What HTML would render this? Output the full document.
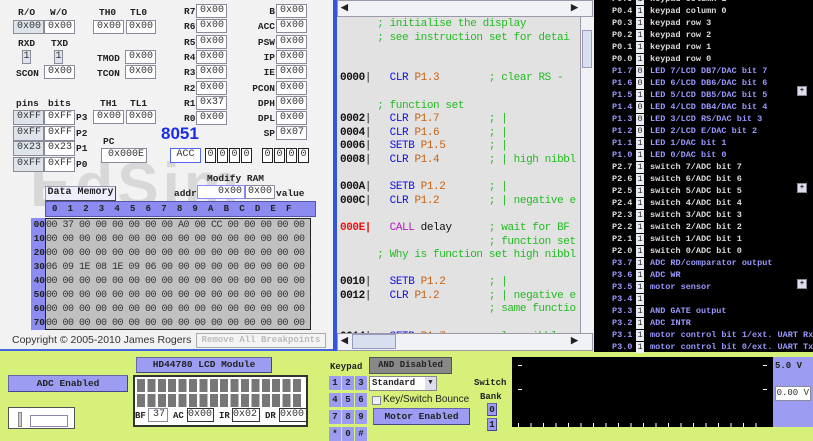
<!DOCTYPE html>
<html><head><meta charset="utf-8"><style>
*{margin:0;padding:0;box-sizing:border-box}
body{width:813px;height:427px;overflow:hidden;position:relative;background:#d6f07a;font-family:"Liberation Mono",monospace;font-size:10px;font-weight:bold;color:#222}
.a{position:absolute;white-space:pre}
.b{position:absolute;background:#fff;border:1px solid #8a8a9a;font-weight:normal;font-size:10px;text-align:right;padding-right:2px;line-height:12px;color:#333}
.g{background:#dde4ea}
.lbl{position:absolute;font-size:9.5px;font-weight:bold;white-space:pre}
.btn{position:absolute;background:#9c9cf2;border:1px solid #66a;border-right-color:#448;border-bottom-color:#448;text-align:center;font-size:9.5px;font-weight:bold;color:#222}
.code{position:absolute;font-size:11px;letter-spacing:-0.4px;white-space:pre;font-weight:normal}
.ad{color:#111;font-weight:bold}.mn{color:#1010e0}.op{color:#c86010}.cm{color:#22bb22}
.pr{position:absolute;left:596px;width:217px;height:12px;font-size:8.5px;line-height:12px;white-space:pre}
.pr .l{position:absolute;left:16px}.pr .v{position:absolute;left:40px;top:1px;width:8px;height:11px;background:#e8eef4;color:#222;text-align:center;font-weight:normal;line-height:11px}.pr .d{position:absolute;left:54px}
</style></head><body>
<!-- left panel -->
<div class="a" style="left:0;top:0;width:334px;height:351px;background:#f2f2f2;border-bottom:2px solid #4466dd"></div>
<div class="a" style="left:30px;top:150px;font-size:62px;color:#d8d8d8;font-family:'Liberation Sans',sans-serif;font-weight:bold;letter-spacing:4px">EdSim</div>
<div class="a" style="left:333px;top:0;width:4px;height:351px;background:#3355dd"></div>
<div class="lbl" style="left:18px;top:7px">R/O</div><div class="lbl" style="left:50px;top:7px">W/O</div>
<div class="b g" style="left:13px;top:20px;width:31px;height:14px">0x00</div><div class="b" style="left:44px;top:20px;width:31px;height:14px">0x00</div>
<div class="lbl" style="left:99px;top:7px">TH0</div><div class="lbl" style="left:130px;top:7px">TL0</div>
<div class="b" style="left:93px;top:20px;width:31px;height:14px">0x00</div><div class="b" style="left:126px;top:20px;width:30px;height:14px">0x00</div>
<div class="lbl" style="left:18px;top:38px">RXD</div><div class="lbl" style="left:51px;top:38px">TXD</div>
<div class="b g" style="left:22px;top:50px;width:9px;height:14px;padding:0;text-align:center">1</div><div class="b g" style="left:54px;top:50px;width:9px;height:14px;padding:0;text-align:center">1</div>
<div class="lbl" style="left:16px;top:68px">SCON</div><div class="b" style="left:44px;top:65px;width:31px;height:14px">0x00</div>
<div class="lbl" style="left:97px;top:53px">TMOD</div><div class="b" style="left:125px;top:50px;width:31px;height:14px">0x00</div>
<div class="lbl" style="left:97px;top:68px">TCON</div><div class="b" style="left:125px;top:65px;width:31px;height:14px">0x00</div>
<div class="lbl" style="left:16px;top:98px">pins</div><div class="lbl" style="left:48px;top:98px">bits</div>
<div class="lbl" style="left:100px;top:98px">TH1</div><div class="lbl" style="left:130px;top:98px">TL1</div>
<div class="b" style="left:93px;top:110px;width:31px;height:14px">0x00</div><div class="b" style="left:126px;top:110px;width:30px;height:14px">0x00</div>
<div class="b g" style="left:13px;top:110px;width:31px;height:15px">0xFF</div><div class="b" style="left:44px;top:110px;width:31px;height:15px">0xFF</div><div class="lbl" style="left:76px;top:112px">P3</div>
<div class="b g" style="left:13px;top:126px;width:31px;height:15px">0xFF</div><div class="b" style="left:44px;top:126px;width:31px;height:15px">0xFF</div><div class="lbl" style="left:76px;top:128px">P2</div>
<div class="b g" style="left:13px;top:141px;width:31px;height:15px">0x23</div><div class="b" style="left:44px;top:141px;width:31px;height:15px">0x23</div><div class="lbl" style="left:76px;top:143px">P1</div>
<div class="b g" style="left:13px;top:157px;width:31px;height:15px">0xFF</div><div class="b" style="left:44px;top:157px;width:31px;height:15px">0xFF</div><div class="lbl" style="left:76px;top:159px">P0</div>
<div class="lbl" style="left:103px;top:136px">PC</div><div class="b" style="left:101px;top:148px;width:46px;height:15px">0x000E</div>
<div class="a" style="left:161px;top:124px;font-family:'Liberation Sans',sans-serif;font-size:17px;color:#1a2ee8">8051</div>
<div class="b" style="left:170px;top:148px;width:31px;height:15px;border:1px solid #5566ee;text-align:center;padding:0">ACC</div>
<div class="a" style="left:205px;top:148px;display:flex;gap:1px"><div class="b" style="position:static;width:11px;height:15px;border-color:#222;padding:0;text-align:center">0</div><div class="b" style="position:static;width:11px;height:15px;border-color:#222;padding:0;text-align:center">0</div><div class="b" style="position:static;width:11px;height:15px;border-color:#222;padding:0;text-align:center">0</div><div class="b" style="position:static;width:11px;height:15px;border-color:#222;padding:0;text-align:center">0</div></div>
<div class="a" style="left:262px;top:148px;display:flex;gap:1px"><div class="b" style="position:static;width:11px;height:15px;border-color:#222;padding:0;text-align:center">0</div><div class="b" style="position:static;width:11px;height:15px;border-color:#222;padding:0;text-align:center">0</div><div class="b" style="position:static;width:11px;height:15px;border-color:#222;padding:0;text-align:center">0</div><div class="b" style="position:static;width:11px;height:15px;border-color:#222;padding:0;text-align:center">0</div></div>
<!-- registers -->
<div class="lbl" style="left:184px;top:6px">R7</div><div class="b" style="left:196px;top:4px;width:31px;height:14px">0x00</div>
<div class="lbl" style="left:184px;top:21px">R6</div><div class="b" style="left:196px;top:19px;width:31px;height:14px">0x00</div>
<div class="lbl" style="left:184px;top:37px">R5</div><div class="b" style="left:196px;top:35px;width:31px;height:14px">0x00</div>
<div class="lbl" style="left:184px;top:52px">R4</div><div class="b" style="left:196px;top:50px;width:31px;height:14px">0x00</div>
<div class="lbl" style="left:184px;top:67px">R3</div><div class="b" style="left:196px;top:65px;width:31px;height:14px">0x00</div>
<div class="lbl" style="left:184px;top:83px">R2</div><div class="b" style="left:196px;top:81px;width:31px;height:14px">0x00</div>
<div class="lbl" style="left:184px;top:98px">R1</div><div class="b" style="left:196px;top:96px;width:31px;height:14px">0x37</div>
<div class="lbl" style="left:184px;top:113px">R0</div><div class="b" style="left:196px;top:111px;width:31px;height:14px">0x00</div>
<div class="lbl" style="left:230px;top:6px;width:45px;text-align:right">B</div><div class="b" style="left:276px;top:4px;width:31px;height:14px">0x00</div>
<div class="lbl" style="left:230px;top:21px;width:45px;text-align:right">ACC</div><div class="b" style="left:276px;top:19px;width:31px;height:14px">0x00</div>
<div class="lbl" style="left:230px;top:37px;width:45px;text-align:right">PSW</div><div class="b" style="left:276px;top:35px;width:31px;height:14px">0x00</div>
<div class="lbl" style="left:230px;top:52px;width:45px;text-align:right">IP</div><div class="b" style="left:276px;top:50px;width:31px;height:14px">0x00</div>
<div class="lbl" style="left:230px;top:67px;width:45px;text-align:right">IE</div><div class="b" style="left:276px;top:65px;width:31px;height:14px">0x00</div>
<div class="lbl" style="left:230px;top:83px;width:45px;text-align:right">PCON</div><div class="b" style="left:276px;top:81px;width:31px;height:14px">0x00</div>
<div class="lbl" style="left:230px;top:98px;width:45px;text-align:right">DPH</div><div class="b" style="left:276px;top:96px;width:31px;height:14px">0x00</div>
<div class="lbl" style="left:230px;top:113px;width:45px;text-align:right">DPL</div><div class="b" style="left:276px;top:111px;width:31px;height:14px">0x00</div>
<div class="lbl" style="left:230px;top:128px;width:45px;text-align:right">SP</div><div class="b" style="left:276px;top:126px;width:31px;height:14px">0x07</div>
<div class="lbl" style="left:207px;top:173px">Modify RAM</div>
<div class="lbl" style="left:174px;top:188px">addr</div><div class="b" style="left:197px;top:185px;width:48px;height:14px;border-color:#88f">0x00</div><div class="b" style="left:245px;top:185px;width:30px;height:14px">0x00</div><div class="lbl" style="left:276px;top:188px">value</div>
<div class="b" style="left:45px;top:186px;width:71px;height:15px;background:#eef;text-align:center;padding:0;font-weight:bold;color:#222;border-color:#99a #445 #445 #99a">Data Memory</div>
<div class="a" style="left:45px;top:201px;width:271px;height:16px;background:#8c8cf0;border:1px solid #55a;font-size:9px;line-height:14px;padding-left:6px;letter-spacing:-0.2px">0  1  2  3  4  5  6  7  8  9  A  B  C  D  E  F</div>
<div class="a" style="left:31px;top:218px;width:14px;height:112px;background:#8c8cf0;font-size:9.5px;line-height:14px;text-align:right">00
10
20
30
40
50
60
70</div>
<div class="a" style="left:45px;top:218px;width:266px;height:112px;background:#c0c0c0;border:1px solid #222;font-weight:normal;font-size:10px;line-height:14px;letter-spacing:-0.5px;color:#333">00 37 00 00 00 00 00 00 A0 00 CC 00 00 00 00 00
00 00 00 00 00 00 00 00 00 00 00 00 00 00 00 00
00 00 00 00 00 00 00 00 00 00 00 00 00 00 00 00
06 09 1E 08 1E 09 06 00 00 00 00 00 00 00 00 00
00 00 00 00 00 00 00 00 00 00 00 00 00 00 00 00
00 00 00 00 00 00 00 00 00 00 00 00 00 00 00 00
00 00 00 00 00 00 00 00 00 00 00 00 00 00 00 00
00 00 00 00 00 00 00 00 00 00 00 00 00 00 00 00</div>
<div class="a" style="left:12px;top:334px;font-family:'Liberation Sans',sans-serif;font-weight:normal;font-size:10.5px;color:#333">Copyright © 2005-2010 James Rogers</div>
<div class="a" style="left:196px;top:333px;width:130px;height:15px;background:#f4f4f4;border:1px solid #aaa;color:#bbb;font-size:9px;text-align:center;line-height:13px">Remove All Breakpoints</div>
<!-- code panel -->
<div class="a" style="left:337px;top:0;width:258px;height:351px;background:#e2e2e2"></div>
<div class="a" style="left:337px;top:0;width:256px;height:17px;background:#f0f2f6;border:1px solid #99a"></div>
<div class="a" style="left:341px;top:3px;font-size:9px">◀</div><div class="a" style="left:571px;top:3px;font-size:9px">▶</div>
<div class="a" style="left:580px;top:17px;width:14px;height:316px;background:#f0f2f6;border-left:1px solid #99a"></div>
<div class="a" style="left:582px;top:30px;width:10px;height:38px;background:#d8e0f0;border:1px solid #99b"></div>
<div class="code" style="left:340px;top:18px;line-height:13.6px"><span class="cm">      ; initialise the display</span>
<span class="cm">      ; see instruction set for detai</span>


<span class="ad">0000</span>|   <span class="mn">CLR</span> <span class="op">P1.3</span>        <span class="cm">; clear RS - </span>

<span class="cm">      ; function set</span>
<span class="ad">0002</span>|   <span class="mn">CLR</span> <span class="op">P1.7</span>        <span class="cm">; |</span>
<span class="ad">0004</span>|   <span class="mn">CLR</span> <span class="op">P1.6</span>        <span class="cm">; |</span>
<span class="ad">0006</span>|   <span class="mn">SETB</span> <span class="op">P1.5</span>       <span class="cm">; |</span>
<span class="ad">0008</span>|   <span class="mn">CLR</span> <span class="op">P1.4</span>        <span class="cm">; | high nibbl</span>

<span class="ad">000A</span>|   <span class="mn">SETB</span> <span class="op">P1.2</span>       <span class="cm">; |</span>
<span class="ad">000C</span>|   <span class="mn">CLR</span> <span class="op">P1.2</span>        <span class="cm">; | negative e</span>

<span style="color:#f01010;font-weight:bold">000E|</span>   <span style="color:#b020c0">CALL</span> <span style="color:#111">delay</span>      <span class="cm">; wait for BF</span>
<span class="cm">                        ; function set</span>
<span class="cm">      ; Why is function set high nibbl</span>

<span class="ad">0010</span>|   <span class="mn">SETB</span> <span class="op">P1.2</span>       <span class="cm">; |</span>
<span class="ad">0012</span>|   <span class="mn">CLR</span> <span class="op">P1.2</span>        <span class="cm">; | negative e</span>
<span class="cm">                        ; same functio</span>

<span class="ad">0014</span>|   <span class="mn">SETB</span> <span class="op">P1.7</span>       <span class="cm">; low nibble</span></div>
<div class="a" style="left:337px;top:333px;width:256px;height:18px;background:#f0f2f6;border:1px solid #99a"></div>
<div class="a" style="left:352px;top:334px;width:44px;height:15px;background:#d8e0f0;border:1px solid #99b"></div>
<div class="a" style="left:341px;top:336px;font-size:9px">◀</div><div class="a" style="left:571px;top:336px;font-size:9px">▶</div>
<!-- port list -->
<div class="a" style="left:594px;top:0;width:219px;height:352px;background:#000"></div>
<div class="pr" style="top:-7px;color:#ddd"><span class="l">P0.5</span><span class="v">1</span><span class="d">keypad column 1</span></div>
<div class="pr" style="top:5px;color:#ddd"><span class="l">P0.4</span><span class="v">1</span><span class="d">keypad column 0</span></div>
<div class="pr" style="top:17px;color:#ddd"><span class="l">P0.3</span><span class="v">1</span><span class="d">keypad row 3</span></div>
<div class="pr" style="top:29px;color:#ddd"><span class="l">P0.2</span><span class="v">1</span><span class="d">keypad row 2</span></div>
<div class="pr" style="top:41px;color:#ddd"><span class="l">P0.1</span><span class="v">1</span><span class="d">keypad row 1</span></div>
<div class="pr" style="top:53px;color:#ddd"><span class="l">P0.0</span><span class="v">1</span><span class="d">keypad row 0</span></div>
<div class="pr" style="top:65px;color:#99f"><span class="l">P1.7</span><span class="v">0</span><span class="d">LED 7/LCD DB7/DAC bit 7</span></div>
<div class="pr" style="top:77px;color:#99f"><span class="l">P1.6</span><span class="v">0</span><span class="d">LED 6/LCD DB6/DAC bit 6</span></div>
<div class="pr" style="top:89px;color:#99f"><span class="l">P1.5</span><span class="v">1</span><span class="d">LED 5/LCD DB5/DAC bit 5</span></div>
<div class="pr" style="top:101px;color:#99f"><span class="l">P1.4</span><span class="v">0</span><span class="d">LED 4/LCD DB4/DAC bit 4</span></div>
<div class="pr" style="top:113px;color:#99f"><span class="l">P1.3</span><span class="v">0</span><span class="d">LED 3/LCD RS/DAC bit 3</span></div>
<div class="pr" style="top:125px;color:#99f"><span class="l">P1.2</span><span class="v">0</span><span class="d">LED 2/LCD E/DAC bit 2</span></div>
<div class="pr" style="top:137px;color:#99f"><span class="l">P1.1</span><span class="v">1</span><span class="d">LED 1/DAC bit 1</span></div>
<div class="pr" style="top:149px;color:#99f"><span class="l">P1.0</span><span class="v">1</span><span class="d">LED 0/DAC bit 0</span></div>
<div class="pr" style="top:161px;color:#ddd"><span class="l">P2.7</span><span class="v">1</span><span class="d">switch 7/ADC bit 7</span></div>
<div class="pr" style="top:173px;color:#ddd"><span class="l">P2.6</span><span class="v">1</span><span class="d">switch 6/ADC bit 6</span></div>
<div class="pr" style="top:185px;color:#ddd"><span class="l">P2.5</span><span class="v">1</span><span class="d">switch 5/ADC bit 5</span></div>
<div class="pr" style="top:197px;color:#ddd"><span class="l">P2.4</span><span class="v">1</span><span class="d">switch 4/ADC bit 4</span></div>
<div class="pr" style="top:209px;color:#ddd"><span class="l">P2.3</span><span class="v">1</span><span class="d">switch 3/ADC bit 3</span></div>
<div class="pr" style="top:221px;color:#ddd"><span class="l">P2.2</span><span class="v">1</span><span class="d">switch 2/ADC bit 2</span></div>
<div class="pr" style="top:233px;color:#ddd"><span class="l">P2.1</span><span class="v">1</span><span class="d">switch 1/ADC bit 1</span></div>
<div class="pr" style="top:245px;color:#ddd"><span class="l">P2.0</span><span class="v">1</span><span class="d">switch 0/ADC bit 0</span></div>
<div class="pr" style="top:257px;color:#99f"><span class="l">P3.7</span><span class="v">1</span><span class="d">ADC RD/comparator output</span></div>
<div class="pr" style="top:269px;color:#99f"><span class="l">P3.6</span><span class="v">1</span><span class="d">ADC WR</span></div>
<div class="pr" style="top:281px;color:#99f"><span class="l">P3.5</span><span class="v">1</span><span class="d">motor sensor</span></div>
<div class="pr" style="top:293px;color:#99f"><span class="l">P3.4</span><span class="v">1</span><span class="d"></span></div>
<div class="pr" style="top:305px;color:#99f"><span class="l">P3.3</span><span class="v">1</span><span class="d">AND GATE output</span></div>
<div class="pr" style="top:317px;color:#99f"><span class="l">P3.2</span><span class="v">1</span><span class="d">ADC INTR</span></div>
<div class="pr" style="top:329px;color:#99f"><span class="l">P3.1</span><span class="v">1</span><span class="d">motor control bit 1/ext. UART Rx</span></div>
<div class="pr" style="top:341px;color:#99f"><span class="l">P3.0</span><span class="v">1</span><span class="d">motor control bit 0/ext. UART Tx</span></div>
<div class="a" style="left:797px;top:86px;width:10px;height:10px;background:#dde;border:1px solid #889;font-size:7px;text-align:center;line-height:9px">+</div>
<div class="a" style="left:797px;top:183px;width:10px;height:10px;background:#dde;border:1px solid #889;font-size:7px;text-align:center;line-height:9px">+</div>
<div class="a" style="left:797px;top:279px;width:10px;height:10px;background:#dde;border:1px solid #889;font-size:7px;text-align:center;line-height:9px">+</div>
<!-- bottom -->
<div class="btn" style="left:8px;top:375px;width:120px;height:17px;line-height:15px">ADC Enabled</div>
<div class="a" style="left:8px;top:407px;width:67px;height:22px;background:#fff;border:1px solid #555"></div>
<div class="a" style="left:18px;top:412px;width:4px;height:15px;background:#ccc;border:1px solid #888"></div>
<div class="a" style="left:30px;top:415px;width:38px;height:12px;border:1px solid #88a"></div>
<div class="btn" style="left:136px;top:357px;width:136px;height:16px;line-height:14px">HD44780 LCD Module</div>
<div class="a" style="left:133px;top:375px;width:175px;height:52px;background:#fff;border:2px solid #333"></div>
<div class="a" style="left:137px;top:379px;width:166px;height:28px;background:repeating-linear-gradient(90deg,#777 0 8px,#fff 8px 10.4px)"></div>
<div class="a" style="left:137px;top:392px;width:166px;height:2px;background:#fff"></div>
<div class="lbl" style="left:135px;top:411px;font-size:9px">BF</div><div class="b" style="left:148px;top:408px;width:20px;height:14px">37</div>
<div class="lbl" style="left:173px;top:411px;font-size:9px">AC</div><div class="b" style="left:187px;top:408px;width:27px;height:14px;border-color:#333">0x00</div>
<div class="lbl" style="left:219px;top:411px;font-size:9px">IR</div><div class="b" style="left:232px;top:408px;width:28px;height:14px;border-color:#333">0x02</div>
<div class="lbl" style="left:265px;top:411px;font-size:9px">DR</div><div class="b" style="left:279px;top:408px;width:28px;height:14px;border-color:#333">0x00</div>
<div class="lbl" style="left:330px;top:362px;font-size:9px">Keypad</div>
<div class="a" style="left:369px;top:357px;width:83px;height:17px;background:#888;border:1px solid #555;font-size:9px;text-align:center;line-height:15px;color:#222">AND Disabled</div>
<div class="a" style="left:329px;top:376px;display:grid;grid-template-columns:12px 12px 12px;gap:1px 1px;font-size:9px;line-height:14px;text-align:center">
<div style="background:#9c9cf2">1</div><div style="background:#9c9cf2">2</div><div style="background:#9c9cf2">3</div>
<div style="background:#9c9cf2;margin-top:2px">4</div><div style="background:#9c9cf2;margin-top:2px">5</div><div style="background:#9c9cf2;margin-top:2px">6</div>
<div style="background:#9c9cf2;margin-top:2px">7</div><div style="background:#9c9cf2;margin-top:2px">8</div><div style="background:#9c9cf2;margin-top:2px">9</div>
<div style="background:#9c9cf2;margin-top:2px">*</div><div style="background:#9c9cf2;margin-top:2px">0</div><div style="background:#9c9cf2;margin-top:2px">#</div></div>
<div class="a" style="left:369px;top:376px;width:68px;height:15px;background:#fff;border:1px solid #888;font-size:9px;line-height:13px;padding-left:2px">Standard</div>
<div class="a" style="left:425px;top:377px;width:11px;height:13px;background:#dde;font-size:7px;text-align:center;line-height:13px">▼</div>
<div class="a" style="left:372px;top:396px;width:9px;height:9px;background:#eef;border:1px solid #889"></div>
<div class="a" style="left:383px;top:394px;font-family:'Liberation Sans',sans-serif;font-weight:normal;font-size:10px">Key/Switch Bounce</div>
<div class="btn" style="left:373px;top:408px;width:97px;height:17px;line-height:15px">Motor Enabled</div>
<div class="lbl" style="left:474px;top:378px;font-size:9px">Switch</div><div class="lbl" style="left:480px;top:392px;font-size:9px">Bank</div>
<div class="btn" style="left:487px;top:403px;width:10px;height:13px;line-height:11px">0</div><div class="btn" style="left:487px;top:418px;width:10px;height:13px;line-height:11px">1</div>
<div class="a" style="left:512px;top:357px;width:261px;height:70px;background:#000"></div>
<div class="a" style="left:518px;top:365px;width:4px;height:1px;background:#fff"></div>
<div class="a" style="left:518px;top:389px;width:4px;height:1px;background:#fff"></div>
<div class="a" style="left:763px;top:365px;width:4px;height:1px;background:#fff"></div>
<div class="a" style="left:763px;top:389px;width:4px;height:1px;background:#fff"></div>
<div class="a" style="left:518px;top:423px;width:250px;height:4px;background:repeating-linear-gradient(90deg,#fff 0 1px,transparent 1px 12.5px)"></div>
<div class="a" style="left:773px;top:357px;width:40px;height:70px;background:#9c9cf2"></div>
<div class="lbl" style="left:775px;top:361px;font-size:9px">5.0 V</div>
<div class="b" style="left:775px;top:386px;width:36px;height:15px;line-height:13px;font-size:9px;white-space:nowrap;padding-right:1px">0.00 V</div>
</body></html>
